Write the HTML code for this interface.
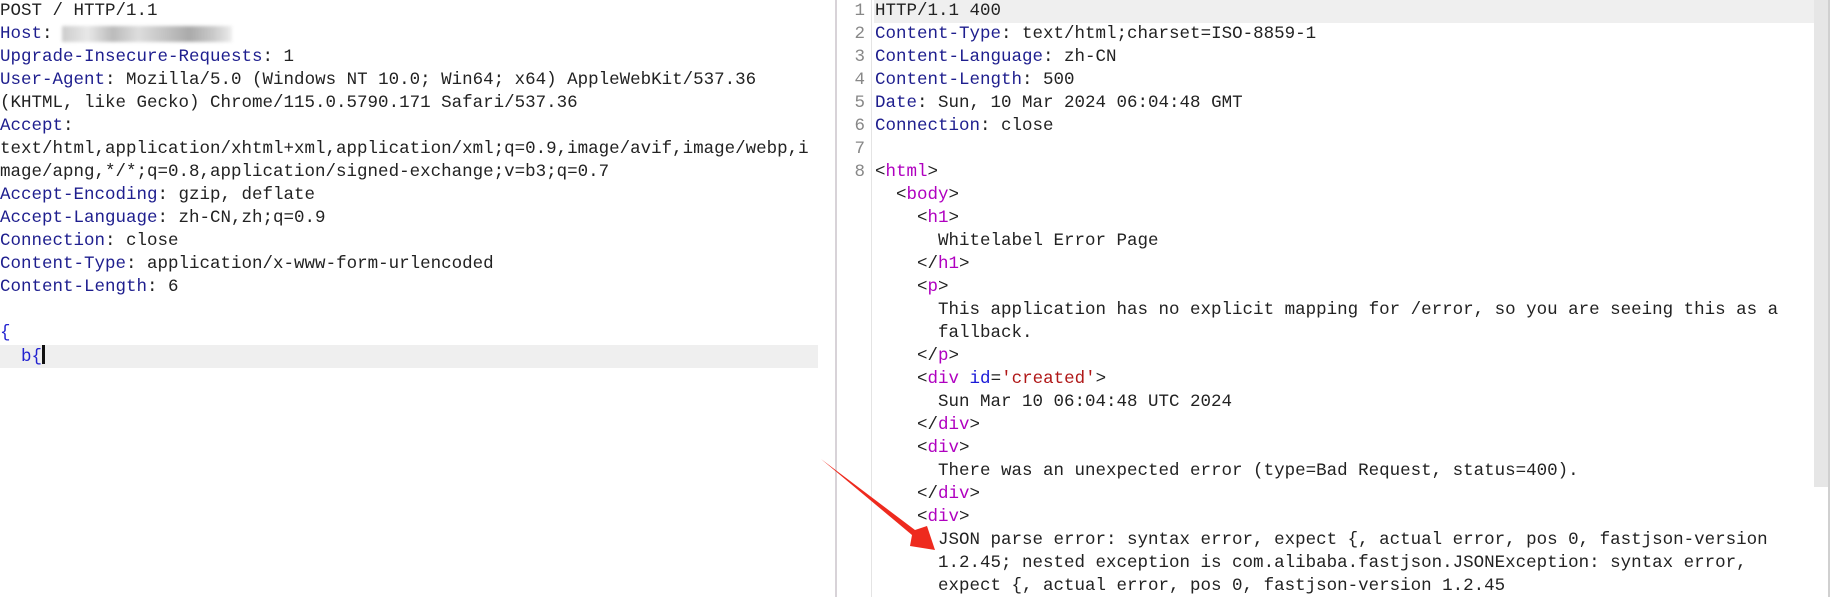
<!DOCTYPE html>
<html><head><meta charset="utf-8"><style>
html,body{margin:0;padding:0;background:#fff;width:1830px;height:597px;overflow:hidden;position:relative}
.ed{position:absolute;top:0;font-family:"Liberation Mono",monospace;font-size:17.5px;line-height:23px;color:#222}
.l{height:23px;white-space:pre}
.k{color:#1e1e8e}
.t{color:#b000c0}
.a{color:#1a1ad8}
.v{color:#b01818}
.b{color:#2323d0}
.n{position:absolute;top:0;left:838px;width:27px;text-align:right;color:#888;font-family:"Liberation Mono",monospace;font-size:17.5px;line-height:23px;white-space:pre}
</style></head><body>
<div style="position:absolute;left:0;top:345px;width:818px;height:23px;background:#efefef"></div>
<div style="position:absolute;left:874px;top:0;width:940px;height:23px;background:#efefef"></div>
<div style="position:absolute;left:835px;top:0;width:2px;height:597px;background:#d8d3d8"></div>
<div style="position:absolute;left:871px;top:0;width:1px;height:597px;background:#e4e4e4"></div>
<div style="position:absolute;left:1814px;top:0;width:16px;height:487px;background:#e6e6e6"></div>
<div style="position:absolute;left:1828px;top:0;width:2px;height:597px;background:#d0d0d0"></div>
<div style="position:absolute;left:62px;top:26px;width:170px;height:16px;background:linear-gradient(90deg,#ccc,#e8e8e8 15%,#bbb 30%,#ddd 45%,#c4c4c4 60%,#aaa 75%,#ccc 90%,#eee);filter:blur(1.5px)"></div>
<div class="ed" style="left:0;width:818px"><div class="l">POST / HTTP/1.1</div><div class="l"><span class="k">Host</span>: </div><div class="l"><span class="k">Upgrade-Insecure-Requests</span>: 1</div><div class="l"><span class="k">User-Agent</span>: Mozilla/5.0 (Windows NT 10.0; Win64; x64) AppleWebKit/537.36</div><div class="l">(KHTML, like Gecko) Chrome/115.0.5790.171 Safari/537.36</div><div class="l"><span class="k">Accept</span>:</div><div class="l">text/html,application/xhtml+xml,application/xml;q=0.9,image/avif,image/webp,i</div><div class="l">mage/apng,*/*;q=0.8,application/signed-exchange;v=b3;q=0.7</div><div class="l"><span class="k">Accept-Encoding</span>: gzip, deflate</div><div class="l"><span class="k">Accept-Language</span>: zh-CN,zh;q=0.9</div><div class="l"><span class="k">Connection</span>: close</div><div class="l"><span class="k">Content-Type</span>: application/x-www-form-urlencoded</div><div class="l"><span class="k">Content-Length</span>: 6</div><div class="l"> </div><div class="l"><span class="b">{</span></div><div class="l"><span class="b">  b{</span><span style="display:inline-block;width:3px;height:19px;background:#111;vertical-align:-3px"></span></div></div>
<div class="n">1
2
3
4
5
6
7
8</div>
<div class="ed" style="left:875px;width:940px"><div class="l">HTTP/1.1 400</div><div class="l"><span class="k">Content-Type</span>: text/html;charset=ISO-8859-1</div><div class="l"><span class="k">Content-Language</span>: zh-CN</div><div class="l"><span class="k">Content-Length</span>: 500</div><div class="l"><span class="k">Date</span>: Sun, 10 Mar 2024 06:04:48 GMT</div><div class="l"><span class="k">Connection</span>: close</div><div class="l"> </div><div class="l">&lt;<span class="t">html</span>&gt;</div><div class="l">  &lt;<span class="t">body</span>&gt;</div><div class="l">    &lt;<span class="t">h1</span>&gt;</div><div class="l">      Whitelabel Error Page</div><div class="l">    &lt;/<span class="t">h1</span>&gt;</div><div class="l">    &lt;<span class="t">p</span>&gt;</div><div class="l">      This application has no explicit mapping for /error, so you are seeing this as a</div><div class="l">      fallback.</div><div class="l">    &lt;/<span class="t">p</span>&gt;</div><div class="l">    &lt;<span class="t">div</span> <span class="a">id</span>=<span class="v">'created'</span>&gt;</div><div class="l">      Sun Mar 10 06:04:48 UTC 2024</div><div class="l">    &lt;/<span class="t">div</span>&gt;</div><div class="l">    &lt;<span class="t">div</span>&gt;</div><div class="l">      There was an unexpected error (type=Bad Request, status=400).</div><div class="l">    &lt;/<span class="t">div</span>&gt;</div><div class="l">    &lt;<span class="t">div</span>&gt;</div><div class="l">      JSON parse error: syntax error, expect {, actual error, pos 0, fastjson-version</div><div class="l">      1.2.45; nested exception is com.alibaba.fastjson.JSONException: syntax error,</div><div class="l">      expect {, actual error, pos 0, fastjson-version 1.2.45</div></div>
<svg style="position:absolute;left:0;top:0" width="1830" height="597">
<polygon fill="#ee2a1e" points="821,459 915,530 927,526 935,550 910,546 912,535"/>
</svg>
</body></html>
